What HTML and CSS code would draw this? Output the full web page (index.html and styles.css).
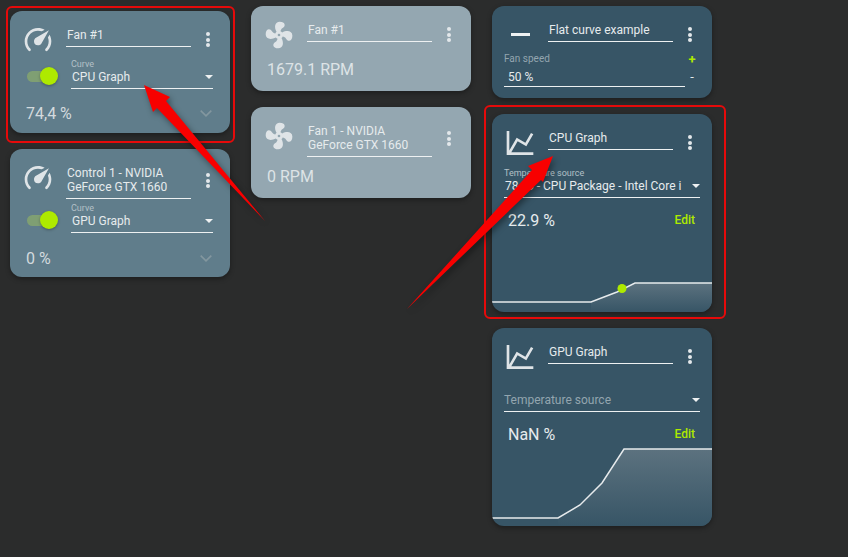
FILE: index.html
```html
<!DOCTYPE html>
<html lang="en">
<head>
    <meta charset="UTF-8">
    <meta name="viewport" content="width=device-width, initial-scale=1.0">
    <title>Fan Control</title>
    <link rel="stylesheet" href="styles.css">
</head>
<body>
    <svg width="0" height="0" class="defs">
        <defs>
            <path id="icoGauge" d="M12,16A3,3 0 0,1 9,13C9,11.88 9.61,10.9 10.5,10.39L20.21,4.77L14.68,14.35C14.18,15.33 13.17,16 12,16M12,3C13.81,3 15.5,3.5 16.97,4.32L14.87,5.53C14,5.19 13,5 12,5A8,8 0 0,0 4,13C4,15.21 4.89,17.21 6.34,18.65H6.35C6.74,19.04 6.74,19.67 6.35,20.06C5.96,20.45 5.32,20.45 4.93,20.07C3.12,18.26 2,15.76 2,13A10,10 0 0,1 12,3M22,13C22,15.76 20.88,18.26 19.07,20.07C18.68,20.45 18.05,20.45 17.66,20.06C17.27,19.67 17.27,19.04 17.66,18.65C19.11,17.2 20,15.21 20,13C20,12 19.81,11 19.46,10.1L20.67,8C21.5,9.5 22,11.18 22,13Z"/>
            <path id="icoFan" d="M12,11A1,1 0 0,0 11,12A1,1 0 0,0 12,13A1,1 0 0,0 13,12A1,1 0 0,0 12,11M12.5,2C17,2 17.11,5.57 14.75,6.75C13.76,7.24 13.32,8.29 13.13,9.22C13.61,9.42 14.03,9.73 14.35,10.13C18.05,8.13 22.03,8.92 22.03,12.5C22.03,17 18.46,17.1 17.28,14.73C16.78,13.74 15.72,13.3 14.79,13.11C14.59,13.59 14.28,14 13.88,14.34C15.87,18.03 15.08,22 11.5,22C7,22 6.91,18.42 9.27,17.24C10.25,16.75 10.69,15.71 10.89,14.79C10.4,14.59 9.97,14.27 9.65,13.87C5.96,15.85 2,15.07 2,11.5C2,7 5.56,6.89 6.74,9.26C7.24,10.25 8.29,10.68 9.22,10.87C9.41,10.39 9.73,9.97 10.14,9.65C8.15,5.96 8.94,2 12.5,2Z"/>
            <path id="icoChart" d="M16,11.78L20.24,4.45L21.97,5.45L16.74,14.5L10.23,10.75L5.46,19H22V21H2V3H4V17.54L9.5,8L16,11.78Z"/>
            <linearGradient id="chartFill" x1="0" y1="0" x2="0" y2="1">
                <stop offset="0" stop-color="#5c727f"/>
                <stop offset="1" stop-color="#375566"/>
            </linearGradient>
        </defs>
    </svg>

    <main class="board">
        <!-- controls -->
        <section class="col col--controls">
            <article class="card card--control">
                <header class="head">
                    <svg class="ico" viewBox="0 0 24 24"><use href="#icoGauge"/></svg>
                    <div class="title">Fan #1</div>
                    <span class="kebab"><i></i><i></i><i></i></span>
                </header>
                <div class="curveRow">
                    <span class="toggle"><i class="toggle__knob"></i></span>
                    <div class="select select--curve">
                        <span class="select__label">Curve</span>
                        <span class="select__value">CPU Graph</span>
                        <i class="caret"></i>
                    </div>
                </div>
                <footer class="foot">
                    <span class="value">74,4 %</span>
                    <svg class="chevron" viewBox="0 0 12 7"><path d="M.7 .7L6 5.8L11.3 .7"/></svg>
                </footer>
            </article>

            <article class="card card--control card--controlTwo">
                <header class="head head--two">
                    <svg class="ico" viewBox="0 0 24 24"><use href="#icoGauge"/></svg>
                    <div class="title">Control 1 - NVIDIA GeForce GTX 1660</div>
                    <span class="kebab"><i></i><i></i><i></i></span>
                </header>
                <div class="curveRow">
                    <span class="toggle"><i class="toggle__knob"></i></span>
                    <div class="select select--curve">
                        <span class="select__label">Curve</span>
                        <span class="select__value">GPU Graph</span>
                        <i class="caret"></i>
                    </div>
                </div>
                <footer class="foot">
                    <span class="value">0 %</span>
                    <svg class="chevron" viewBox="0 0 12 7"><path d="M.7 .7L6 5.8L11.3 .7"/></svg>
                </footer>
            </article>
        </section>

        <!-- speeds -->
        <section class="col">
            <article class="card card--speed">
                <header class="head">
                    <svg class="ico" viewBox="0 0 24 24"><use href="#icoFan"/></svg>
                    <div class="title">Fan #1</div>
                    <span class="kebab"><i></i><i></i><i></i></span>
                </header>
                <div class="rpm">1679.1 RPM</div>
            </article>

            <article class="card card--speed card--speedTwo">
                <header class="head head--two">
                    <svg class="ico" viewBox="0 0 24 24"><use href="#icoFan"/></svg>
                    <div class="title">Fan 1 - NVIDIA GeForce GTX 1660</div>
                    <span class="kebab"><i></i><i></i><i></i></span>
                </header>
                <div class="rpm">0 RPM</div>
            </article>
        </section>

        <!-- curves -->
        <section class="col">
            <article class="card card--flat">
                <header class="head">
                    <span class="dash"></span>
                    <div class="title">Flat curve example</div>
                    <span class="kebab"><i></i><i></i><i></i></span>
                </header>
                <div class="speedRow">
                    <div class="speedInput">
                        <span class="select__label">Fan speed</span>
                        <span class="speedInput__value">50 %</span>
                    </div>
                    <div class="stepper"><span class="stepper__plus">+</span><span class="stepper__minus">-</span></div>
                </div>
            </article>

            <article class="card card--graph">
                <header class="head">
                    <svg class="ico" viewBox="0 0 24 24"><use href="#icoChart"/></svg>
                    <div class="title">CPU Graph</div>
                    <span class="kebab"><i></i><i></i><i></i></span>
                </header>
                <div class="select select--temp">
                    <span class="select__label">Temperature source</span>
                    <span class="select__value">78 °C - CPU Package - Intel Core i</span>
                    <i class="caret"></i>
                </div>
                <div class="graphRow">
                    <span class="graphRow__value">22.9 %</span>
                    <span class="edit">Edit</span>
                </div>
                <svg class="chart" viewBox="0 0 220 90" width="220" height="90">
                    <path class="chart__fill" d="M99 80L125 70L143 61H220V90H99Z"/>
                    <path class="chart__line" d="M0 80H99L125 70L143 61H220"/>
                    <circle class="chart__dot" cx="130" cy="66.5" r="4.5"/>
                </svg>
            </article>

            <article class="card card--graph">
                <header class="head">
                    <svg class="ico" viewBox="0 0 24 24"><use href="#icoChart"/></svg>
                    <div class="title">GPU Graph</div>
                    <span class="kebab"><i></i><i></i><i></i></span>
                </header>
                <div class="select select--temp">
                    <span class="select__value select__value--empty">Temperature source</span>
                    <i class="caret"></i>
                </div>
                <div class="graphRow">
                    <span class="graphRow__value">NaN %</span>
                    <span class="edit">Edit</span>
                </div>
                <svg class="chart" viewBox="0 0 220 90" width="220" height="90">
                    <path class="chart__fill" d="M66 82L88 69L110 47L132 13H220V90H66Z"/>
                    <path class="chart__line" d="M0 82H66L88 69L110 47L132 13H220"/>
                </svg>
            </article>
        </section>
    </main>

    <!-- annotations drawn over the shot -->
    <div class="mark mark--one"></div>
    <div class="mark mark--two"></div>
    <svg class="arrows" width="848" height="557" viewBox="0 0 848 557">
        <path d="M265 221L157 108L153 112L144 85L170 97L166 101Z"/>
        <path d="M407 309L532 170L528 166L553 156L543 182L541 180Z"/>
    </svg>
</body>
</html>
```

FILE: styles.css
```css
* {box-sizing: border-box;}
html, body {height: 100%;}
body {margin: 0; background-color: #2b2c2c; font-family: Roboto, "Liberation Sans", sans-serif; position: relative; overflow: hidden;}
.defs {position: absolute;}

.board {display: flex; align-items: flex-start; gap: 21px; padding: 6px 0 0 10px;}
.col {width: 220px; display: flex; flex-direction: column; gap: 16px;}
.col--controls {padding-top: 5px;}

.card {width: 220px; border-radius: 12px; overflow: hidden; box-shadow: 0 2px 5px rgba(0,0,0,.35); color: #e6ebed;}
.card--control {background-color: #607d8b; height: 122px;}
.card--controlTwo {height: 128px;}
.card--speed {background-color: #94a7b1; height: 85px;}
.card--speedTwo {height: 91px;}
.card--flat {background-color: #375566; height: 92px;}
.card--graph {background-color: #375566; height: 198px; position: relative;}

.head {display: flex; align-items: flex-start; height: 36px; padding-left: 12px;}
.ico {width: 32px; height: 32px; margin-top: 13px; fill: #dfe4e7; flex: none;}
.title {width: 125px; margin-left: 12px; height: 36px; padding: 17px 1px 0; font-size: 12px; line-height: 14px; border-bottom: 1px solid #eef1f2; flex: none;}
.head--two {height: 50px;}
.head--two .title {height: 50px;}
.kebab {display: flex; flex-direction: column; gap: 1.5px; margin: 21px 0 0 15px;}
.head--two .kebab {margin-top: 24px;}
.kebab i {display: block; width: 4px; height: 4px; border-radius: 50%; background-color: #e3e8eb;}

.curveRow {display: flex; margin-top: 12px; padding-left: 17px; height: 30px;}
.card--controlTwo .curveRow {margin-top: 4px;}
.toggle {width: 30px; height: 11px; margin-top: 12px; border-radius: 6px; background-color: #7f9f73; position: relative; flex: none;}
.toggle__knob {position: absolute; right: -1px; top: -4px; width: 18px; height: 18px; border-radius: 50%; background-color: #aeea00; box-shadow: 0 1px 3px rgba(0,0,0,.3);}

.select {position: relative; border-bottom: 1px solid #eef1f2;}
.select--curve {width: 142px; height: 30px; margin-left: 14px;}
.select--temp {width: 196px; height: 30px; margin: 18px 0 0 12px;}
.select__label {display: block; font-size: 9px; line-height: 10px; color: #b3c0c7;}
.select__value {display: block; font-size: 12px; line-height: 14px; padding: 1px 1px 0; white-space: nowrap;}
.select__value--empty {padding: 11px 0 0; color: #93a5af;}
.caret {position: absolute; right: 0; bottom: 9px; border: 4px solid transparent; border-top: 4px solid #eef1f2; border-bottom: 0;}

.foot {display: flex; justify-content: space-between; align-items: center; padding: 0 18px 0 16px; height: 20px; margin-top: 14px;}
.card--controlTwo .foot {margin-top: 15px;}
.value {font-size: 16px; color: #d3dade;}
.chevron {width: 12px; height: 7px; fill: none; stroke: #83979f; stroke-width: 1.6;}

.rpm {font-size: 16px; line-height: 18px; padding: 19px 0 0 16px; color: #dde3e6;}
.card--speedTwo .rpm {padding-top: 11px;}

.dash {width: 19px; height: 3px; margin-top: 27px; background-color: #eef1f2; flex: none;}
.card--flat .head {padding-left: 19px;}
.card--flat .title {margin-left: 18px;}
.speedRow {display: flex; margin: 11px 0 0 12px;}
.speedInput {width: 181px; height: 34px; border-bottom: 1px solid #eef1f2;}
.speedInput .select__label {font-size: 10px; line-height: 12px; color: #93a5af;}
.speedInput__value {display: block; font-size: 12px; line-height: 14px; padding: 5px 4px 0;}
.stepper {display: flex; flex-direction: column; align-items: center; width: 14px;}
.stepper__plus {font-size: 13px; line-height: 14px; font-weight: bold; color: #aeea00;}
.stepper__minus {font-size: 13px; line-height: 14px; margin-top: 3px;}

.graphRow {display: flex; justify-content: space-between; align-items: center; padding: 0 17px 0 16px; height: 22px; margin-top: 11px;}
.graphRow__value {font-size: 16px;}
.edit {font-size: 12px; font-weight: 500; color: #aeea00;}

.chart {position: absolute; left: 0; bottom: 0; display: block;}
.chart__fill {fill: url(#chartFill);}
.chart__line {fill: none; stroke: #e6eaec; stroke-width: 1.5;}
.chart__dot {fill: #aeea00;}

.mark {position: absolute; border: 2px solid #e60a0a; border-radius: 6px;}
.mark--one {left: 6px; top: 6px; width: 229px; height: 137px;}
.mark--two {left: 484px; top: 105px; width: 242px; height: 214px;}
.arrows {position: absolute; left: 0; top: 0; filter: drop-shadow(2px 3px 3px rgba(0,0,0,.4));}
.arrows path {fill: #f80000;}
```
